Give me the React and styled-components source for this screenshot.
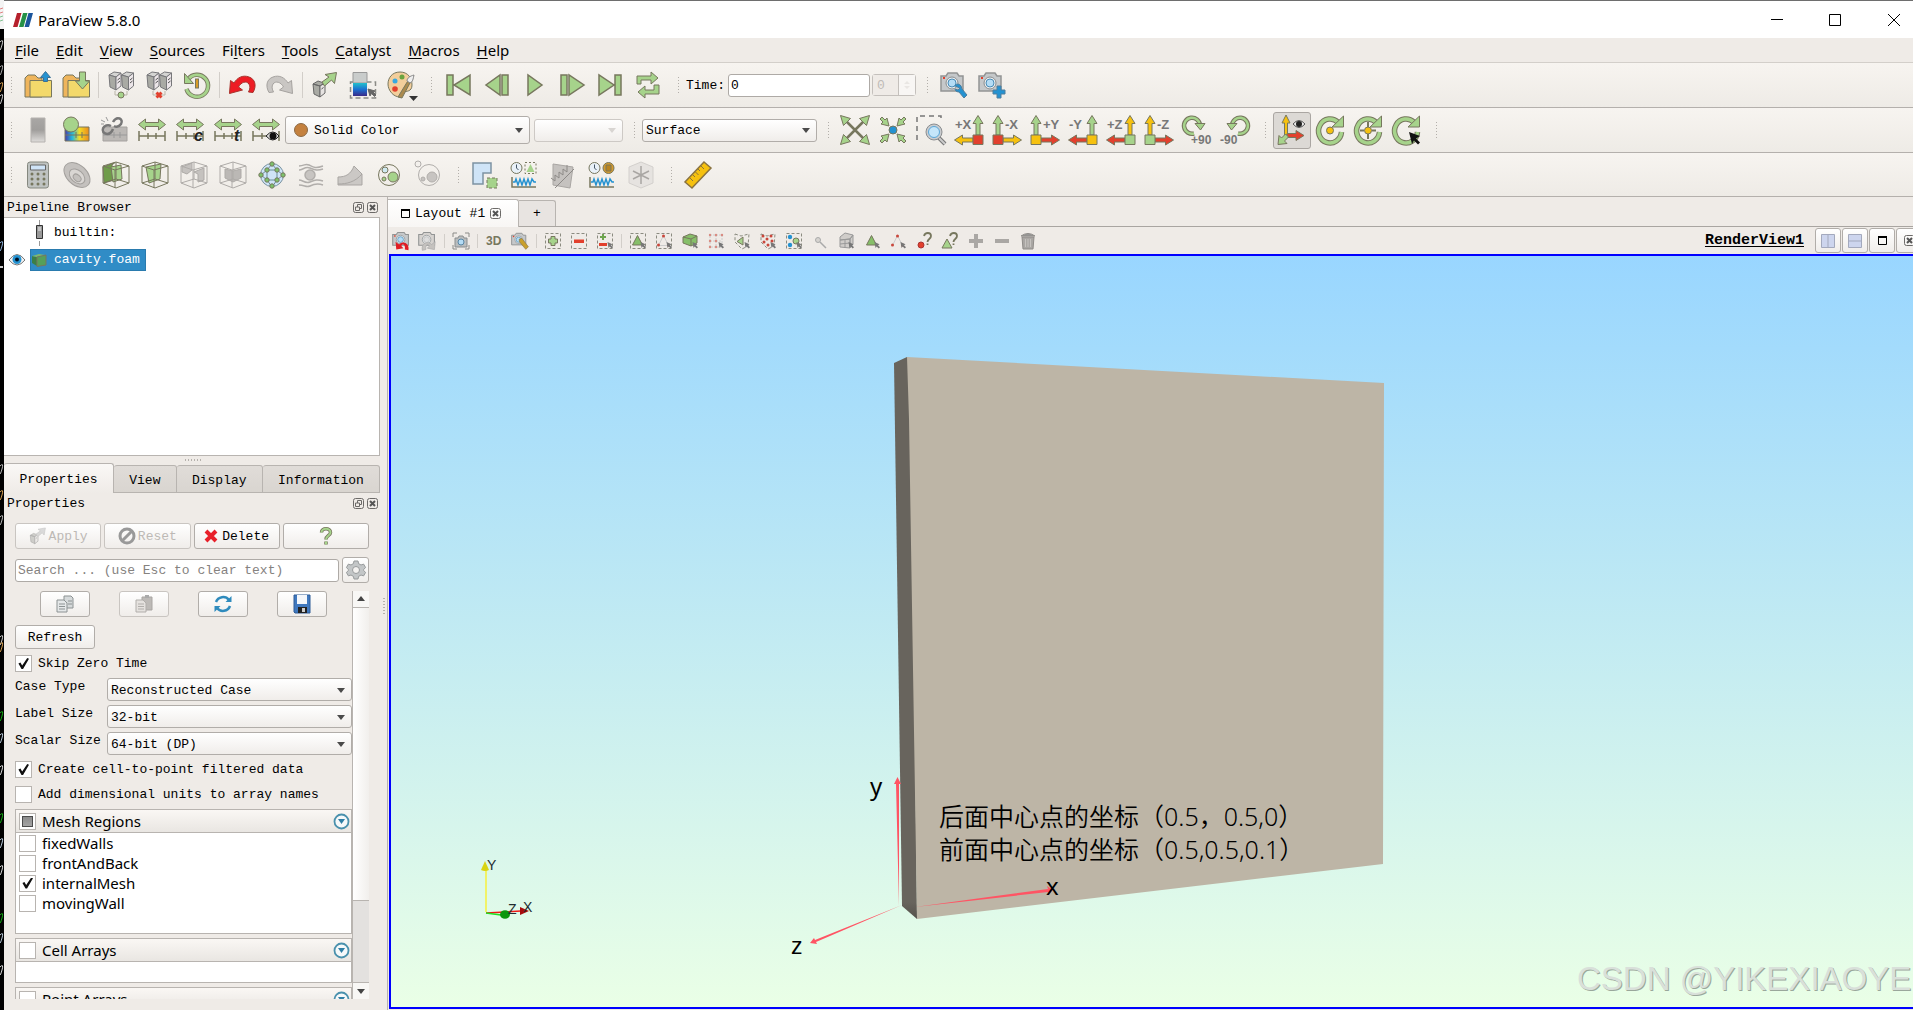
import React, {useEffect, useRef} from 'react';
import styled, {createGlobalStyle, css} from 'styled-components';

const G = '#a6d38b';
const O = '#77775e';
const Y = '#f6c10f';
const R = '#e2402d';
const B = '#2492d1';
const mono = '"Liberation Mono", monospace';
const sans = '"Noto Sans", "Noto Sans CJK SC", sans-serif';

const GlobalStyle = createGlobalStyle`
    * {
        box-sizing: border-box;
    }
    body {
        margin: 0;
        overflow: hidden;
        background: #efebe7;
        color: #000;
        font-family: ${mono};
        font-size: 13px;
    }
    button, input, select {
        font: inherit;
        color: inherit;
        margin: 0;
    }
    svg {
        display: block;
        flex: none;
        overflow: visible;
    }
`;

/* ---------- frame ---------- */

const Desktop = styled.div`
    display: flex;
    height: 100vh;
    overflow: hidden;
`;

const Behind = styled.div`
    flex: none;
    width: 4px;
    overflow: hidden;
    background: #000;
`;

const Window = styled.div`
    flex: 1;
    min-width: 0;
    display: flex;
    flex-direction: column;
`;

const TitleBar = styled.header`
    display: flex;
    align-items: center;
    height: 38px;
    padding-left: 9px;
    border-top: 1px solid #6e6e6e;
    background: #fff;
    font: 15px ${sans};
`;

const Title = styled.span`
    flex: 1;
    padding-left: 5px;
`;

const WindowButton = styled.button`
    display: flex;
    align-items: center;
    justify-content: center;
    width: 58px;
    height: 37px;
    padding: 0;
    border: 0;
    background: none;
    &:last-child {
        width: 38px;
        margin-left: 11px;
    }
`;

const MenuBar = styled.nav`
    display: flex;
    align-items: center;
    gap: 17px;
    height: 25px;
    padding-left: 11px;
    border-bottom: 1px solid #d3cfca;
    font: 15px ${sans};
`;

const MenuItem = styled.button`
    padding: 0;
    border: 0;
    background: none;
    line-height: 20px;
    u {
        text-underline-offset: 2px;
    }
`;

const ToolBar = styled.div`
    display: flex;
    align-items: center;
    height: ${props => props.$short ? 44 : 45}px;
    flex: none;
    border-bottom: 1px solid #b4b0ac;
    background: linear-gradient(#f7f4f0, #eeebe6);
`;

const Grip = styled.span`
    flex: none;
    width: 4px;
    height: 18px;
    margin: 0 ${props => props.$tight ? 4 : 5}px 0 10px;
    background: radial-gradient(circle, #b3afaa 35%, transparent 45%) 0 0 / 3px 3px;
    &:first-child {
        margin-left: 6px;
    }
`;

const Sep = styled.span`
    flex: none;
    width: 1px;
    height: ${props => props.$small ? 14 : 26}px;
    margin: 0 3px;
    background: #d2cec9;
`;

const ToolButton = styled.button`
    flex: none;
    display: flex;
    align-items: center;
    justify-content: center;
    width: ${props => props.$w || 38}px;
    height: ${props => props.$w === 26 ? 26 : 37}px;
    padding: 0;
    border: 1px solid transparent;
    border-radius: 3px;
    background: none;
    ${props => props.$pressed && css`
        border-color: #aaa6a2;
        background: #dcd9d5;
    `}
`;

const face = css`
    border: 1px solid #b1ada9;
    border-radius: 3px;
    background: linear-gradient(#fff, #f0edea);
`;

const TimeLabel = styled.label`
    width: 42px;
`;

const Field = styled.input`
    height: 23px;
    padding: 1px 2px 0;
    border: 1px solid #aeaaa6;
    border-radius: 3px;
    background: #fff;
    outline: 0;
    &::placeholder {
        color: #85827f;
        opacity: 1;
    }
`;

const TimeField = styled(Field)`
    width: 142px;
`;

const Spin = styled.div`
    display: flex;
    width: 44px;
    height: 22px;
    margin-left: 2px;
    border: 1px solid #c4c0bc;
    border-radius: 3px;
    background: #fff;
    input {
        width: 26px;
        padding: 0 4px;
        border: 0;
        border-right: 1px solid #c4c0bc;
        background: #efebe7;
        color: #bfbbb7;
    }
    button {
        flex: 1;
        display: flex;
        align-items: center;
        justify-content: center;
        padding: 0;
        border: 0;
        background: #f8f6f4;
    }
`;

const SelectBox = styled.div`
    position: relative;
    flex: ${props => props.$w ? 'none' : 1};
    width: ${props => props.$w ? props.$w + 'px' : 'auto'};
    height: ${props => props.$h || 23}px;
    margin-left: ${props => props.$gap || 0}px;
    select {
        appearance: none;
        width: 100%;
        height: 100%;
        padding: 1px 20px 0 ${props => props.$icon ? 28 : 3}px;
        ${face}
        opacity: 1;
    }
    select:disabled {
        border-color: #cdc9c5;
    }
    &::after {
        content: '';
        position: absolute;
        right: 7px;
        top: calc(50% - 2px);
        border: 4px solid transparent;
        border-top: 5px solid ${props => props.$off ? '#d8d5d2' : '#4a4a4a'};
        border-bottom: 0;
        pointer-events: none;
    }
`;

const Dot = styled.span`
    position: absolute;
    left: 9px;
    top: 7px;
    width: 14px;
    height: 14px;
    border: 1px solid #8c6a45;
    border-radius: 50%;
    background: #c4813f;
`;

const Body = styled.div`
    flex: 1;
    min-height: 0;
    display: flex;
`;

/* ---------- left dock ---------- */

const Dock = styled.aside`
    flex: none;
    width: 376px;
    display: flex;
    flex-direction: column;
`;

const DockTitle = styled.div`
    flex: none;
    display: flex;
    align-items: center;
    gap: 3px;
    height: 20px;
    padding: 1px 2px 0 3px;
    span {
        flex: 1;
    }
`;

const TinyButton = styled.button`
    display: flex;
    padding: 0;
    border: 0;
    background: none;
`;

const Tree = styled.ul`
    flex: none;
    height: 239px;
    margin: 0;
    padding: 1px 0 0;
    border: 1px solid #b8b4b0;
    border-left: 0;
    background: #fff;
    list-style: none;
`;

const TreeRow = styled.li`
    display: flex;
    align-items: center;
    height: 27px;
    padding-left: 4px;
`;

const EyeSlot = styled.span`
    width: 22px;
`;

const TreeName = styled.span`
    display: flex;
    align-items: center;
    gap: 9px;
    height: 22px;
    padding: 0 5px 0 1px;
    ${props => props.$selected && css`
        border: 1px solid #2a7bae;
        padding-left: 0;
        background: #308cc6;
        color: #fff;
    `}
`;

const Splitter = styled.div`
    flex: none;
    display: flex;
    align-items: center;
    justify-content: center;
    height: 7px;
    span {
        width: 17px;
        height: 2px;
        background: radial-gradient(circle, #b5b1ac 40%, transparent 50%) 0 0 / 3px 2px;
    }
`;

const SideSplitter = styled.div`
    flex: none;
    width: 7px;
    padding: 400px 0 0 3px;
    span {
        display: block;
        width: 2px;
        height: 17px;
        background: radial-gradient(circle, #b5b1ac 40%, transparent 50%) 0 0 / 2px 3px;
    }
`;

const Tabs = styled.div`
    flex: none;
    display: flex;
    align-items: flex-end;
    height: 30px;
`;

const Tab = styled.button`
    flex: ${props => props.$grow};
    height: 28px;
    padding: 2px 0 0;
    border: 1px solid #b8b4b0;
    border-left: 0;
    border-radius: 3px 3px 0 0;
    background: linear-gradient(#e0dcd8, #d9d5d0);
    ${props => props.$active && css`
        height: 30px;
        border-bottom: 0;
        background: linear-gradient(#faf8f6, #efebe7);
    `}
`;

const Panel = styled.div`
    flex: 1;
    min-height: 0;
    display: flex;
    flex-direction: column;
    padding: 10px 11px 11px;
`;

const Actions = styled.div`
    display: grid;
    grid-template-columns: repeat(4, 1fr);
    gap: 3px;
`;

const Push = styled.button`
    display: flex;
    align-items: center;
    justify-content: center;
    gap: ${props => props.$gap || 2}px;
    width: ${props => props.$w ? props.$w + 'px' : 'auto'};
    height: ${props => props.$h || 26}px;
    padding: 0;
    ${face}
    &:disabled {
        border-color: #c9c5c1;
        color: #bdb9b5;
    }
`;

const SearchRow = styled.div`
    display: flex;
    align-items: center;
    gap: 3px;
    padding: 8px 0;
    input {
        flex: 1;
        min-width: 0;
    }
`;

const ScrollArea = styled.div`
    flex: 1;
    min-height: 0;
    display: flex;
`;

const ScrollContent = styled.div`
    flex: 1;
    min-width: 0;
    overflow: hidden;
`;

const ScrollBar = styled.div`
    flex: none;
    display: flex;
    flex-direction: column;
    width: 17px;
    border-left: 1px solid #b8b4b0;
    background: #e3e1df;
    button {
        display: flex;
        align-items: center;
        justify-content: center;
        height: 16px;
        padding: 0;
        border: 0;
        background: #f8f7f5;
    }
`;

const Thumb = styled.div`
    height: 72%;
    border: 1px solid #b8b4b0;
    border-width: 1px 0;
    background: linear-gradient(90deg, #fff, #f1efec);
`;

const Groove = styled.div`
    flex: 1;
    border-bottom: 1px solid #b8b4b0;
`;

const IconRow = styled.div`
    display: grid;
    grid-template-columns: repeat(4, 1fr);
    justify-items: center;
    padding: 0 11px 8px 10px;
`;

const Check = styled.label`
    display: flex;
    align-items: center;
    gap: 6px;
    height: 17px;
    white-space: nowrap;
`;

const Checks = styled.div`
    display: flex;
    flex-direction: column;
    gap: 8px;
    padding: 6px 0;
`;

const Box = styled.input`
    appearance: none;
    flex: none;
    position: relative;
    width: 17px;
    height: 17px;
    border: 1px solid #b8b4b0;
    background: #fff;
    &:checked::before {
        content: '';
        position: absolute;
        inset: 2px;
        background: #111;
        clip-path: polygon(4% 50%, 22% 42%, 38% 68%, 84% 0, 100% 6%, 46% 100%, 32% 100%);
    }
    &:indeterminate::before {
        content: '';
        position: absolute;
        inset: 2px;
        border: 1px solid #4b4b4b;
        background: linear-gradient(#8b8b8b, #a3a3a3);
    }
`;

const PropertyList = styled.div`
    display: grid;
    gap: 4px;
`;

const Property = styled.div`
    display: flex;
    align-items: flex-start;
    label {
        width: 92px;
        line-height: 18px;
        white-space: nowrap;
    }
`;

const Group = styled.section`
    height: ${props => props.$h}px;
    margin-bottom: 4px;
    border: 1px solid #b8b4b0;
    background: #fff;
    font: 15px/20px ${sans};
`;

const GroupHead = styled.div`
    display: flex;
    align-items: center;
    justify-content: space-between;
    height: 23px;
    padding: 0 1px 0 3px;
    border-bottom: 1px solid #b8b4b0;
    background: linear-gradient(#faf7f4, #e9e6e2);
`;

const GroupRow = styled.div`
    display: flex;
    align-items: center;
    height: 20px;
    padding-left: 3px;
`;

/* ---------- render area ---------- */

const Main = styled.main`
    flex: 1;
    min-width: 0;
    display: flex;
    flex-direction: column;
    margin-right: -10px;
    padding-bottom: 1px;
    border-left: 1px solid #b8b4b0;
`;

const LayoutTabs = styled.div`
    flex: none;
    display: flex;
    align-items: flex-end;
    height: 30px;
    border-bottom: 1px solid #a9a5a1;
`;

const LayoutTab = styled.div`
    display: flex;
    align-items: center;
    gap: 5px;
    height: 28px;
    width: 131px;
    padding-left: 13px;
    margin-bottom: -1px;
    border: 1px solid #b8b4b0;
    border-left: 0;
    border-bottom: 0;
    border-radius: 0 3px 0 0;
    background: linear-gradient(#fff, #f8f6f4);
`;

const AddTab = styled.button`
    width: 37px;
    height: 26px;
    padding: 0;
    border: 1px solid #b8b4b0;
    border-left: 0;
    border-bottom: 0;
    border-radius: 0 3px 0 0;
    background: #e8e4e1;
`;

const ViewBar = styled.div`
    flex: none;
    display: flex;
    align-items: center;
    height: 27px;
    padding-left: 1px;
`;

const ViewName = styled.a`
    margin-left: auto;
    margin-right: 11px;
    color: #000;
    font-size: 15px;
    font-weight: 700;
    text-underline-offset: 2px;
`;

const ViewButtons = styled.div`
    display: flex;
    gap: 1px;
    padding-right: 1px;
`;

const Viewport = styled.div`
    flex: 1;
    min-height: 0;
    margin-left: 1px;
    border: 2px solid #0000ff;
    background: linear-gradient(#99d6ff, #eaffe6);
    svg {
        width: 100%;
        height: 100%;
    }
`;

/* ---------- icons ---------- */

const Icon = ({s = 28, v = s, children}) => (
    <svg width={s} height={s} viewBox={`0 0 ${v} ${v}`} fill="none" stroke={O} strokeWidth="1" aria-hidden="true">{children}</svg>
);

const Folder = ({down}) => (
    <Icon>
        <path d="M1 26V7l3-3h7l3 3h4v19z" fill="#efb55c" />
        <path d="M6 9.500h21.500V26H6z" fill="#f3d96b" />
        {down
            ? <path d="M17.500 1h6v9h4l-7 8-7-8h4z" fill={G} />
            : <path d="M21.500.5l5 6h-3v4h-4v-4h-3z" fill={B} stroke="#3a7196" />}
    </Icon>
);

const Tower = ({x}) => (
    <g transform={`translate(${x} 0)`} stroke="#77777a">
        <path d="M1 4l5-3 7 1-5 4z" fill="#d5d5d3" />
        <path d="M1 4l7 2v13l-6-3z" fill="#a9aaa4" />
        <path d="M8 6l5-4v13l-5 4z" fill="#ece6e9" />
        <path d="M9.500 9l2.500-2M9.500 12l2.500-2" stroke="#555" />
    </g>
);

const Servers = ({off}) => (
    <Icon>
        <Tower x={1} /><Tower x={13.500} />
        <path d="M8 20v4h12v-4" stroke="#b9b5a8" />
        {off
            ? <path d="M11.500 21.500l5 5m0-5l-5 5" stroke={R} strokeWidth="3" />
            : <circle cx="14" cy="24" r="3" fill={G} />}
    </Icon>
);

const Recent = () => (
    <Icon>
        <path d="M5 8.500A11 11 0 1 1 3.500 18" stroke={O} strokeWidth="4.500" />
        <path d="M5 8.500A11 11 0 1 1 3.500 18" stroke={G} strokeWidth="2.800" />
        <path d="M1.500 2.500v10h9z" fill={G} />
        <rect x="12.500" y="8" width="3" height="9" fill="#d99c26" />
    </Icon>
);

const Undo = ({redo}) => (
    <Icon>
        <path
            transform={redo ? 'translate(28 0) scale(-1 1)' : ''}
            d="M2.500 9.500L1.500 22.500l13-3.500-4-3c2.500-5 8-6.500 10.500-3 1.500 2.500 1 5-.5 8l4.500.5c4-7 2-13.500-4-15.500C14.500 3.500 9 7 6 12z"
            fill={redo ? '#c9c6c3' : '#ee1c24'}
            stroke={redo ? '#a5a29f' : '#a8322c'}
        />
    </Icon>
);

const Cube = ({gray}) => (
    <Icon>
        <path d="M2 13l5-3 6 2-4 3zM2 13l7 2v11l-6-3z" fill="#a9aaa4" stroke="#666" />
        <path d="M9 15l5-3v10l-5 4z" fill="#e6e3e1" stroke="#666" />
        <path d="M10.500 18l2-1.500" stroke="#555" />
        <path d="M11 11l7-5-4-2.500 11.500-2-2 11-3-3.500-7 6z" fill={gray ? '#bbb' : G} stroke={gray ? '#999' : O} />
    </Icon>
);

const ColorSelect = () => (
    <Icon>
        <defs>
            <linearGradient id="cs" x2="0" y2="1"><stop offset="0" stopColor="#23c0cc" /><stop offset=".5" stopColor="#1c6fd0" /><stop offset="1" stopColor="#3b2a88" /></linearGradient>
        </defs>
        <path d="M1.500 11h25v16h-25z" stroke="#8b8b86" strokeDasharray="5 3" strokeWidth="1.500" />
        <path d="M4 1.500h14V12H4z" fill="#c9cccb" stroke="#999" />
        <path d="M4 12h14v13H4z" fill="url(#cs)" stroke="none" />
        <path d="M19 18l2 7 1.500-2.500 3 3 1.500-1.500-3-3 2-1z" fill="#666" stroke="#666" />
    </Icon>
);

const Palette = () => (
    <Icon>
        <path d="M13 1C5 1 1 7 1 13s5 13 12 13c3 0 2-4 4-5s8 0 8-7S21 1 13 1z" fill="#f3ce9b" />
        <circle cx="15" cy="6" r="2.500" fill="#69a33f" stroke="none" />
        <circle cx="8" cy="10" r="2.500" fill="#38a9e0" stroke="none" />
        <circle cx="8" cy="18" r="2.800" fill={R} stroke="none" />
        <path d="M22 8L11 26l4 1 9-17z" fill="#ab8a4e" />
        <path d="M20 10c0-3 3-5 7-6-1 4-1 7-4 8z" fill="#eee" stroke="#888" />
        <path d="M22 25h9l-4.500 5z" fill="#333" stroke="none" />
    </Icon>
);

const vcr = {
    first: 'M3 4h6v20H3zM26 4v20L10 14z',
    prev: 'M20 4h6v20h-6zM18 4v20L4 14z',
    play: 'M8 4v20l14-10z',
    next: 'M3 4h6v20H3zM11 4v20l15-10z',
    last: 'M19 4h6v20h-6zM3 4v20l15-10z',
};

const Vcr = ({kind}) => (
    <Icon><path d={vcr[kind]} fill={G} strokeWidth="1.500" /></Icon>
);

const Loop = () => (
    <Icon>
        <path d="M3 13V5h14V1l7 6-7 6V9H7v4z" fill={G} />
        <path d="M25 14v9H11v4l-7-6 7-6v4h9v-5z" fill={G} />
    </Icon>
);

const Camera = ({s = 28, extra, gray}) => (
    <Icon s={s} v={28}>
        <path d="M1 5h5l2-3h9l2 3h4v15H1z" fill={gray ? '#d6d3d0' : '#c5c8ca'} stroke="#929494" strokeWidth="1.500" />
        <circle cx="12" cy="12" r="6" fill="#e8eaeb" stroke="#8b8f91" />
        <circle cx="12" cy="12" r="4" fill={gray ? '#ddd' : '#b4dcf5'} stroke={gray ? '#bbb' : '#4b8db8'} />
        {!gray && <path d="M3 7h2" stroke={R} strokeWidth="2" />}
        {extra}
    </Icon>
);

const Bar = () => (
    <Icon>
        <defs>
            <linearGradient id="gb" x2="0" y2="1"><stop stopColor="#a9a7a5" /><stop offset=".5" stopColor="#a09e9c" /><stop offset="1" stopColor="#dedcda" /></linearGradient>
        </defs>
        <path d="M7 2h14v24H7z" fill="url(#gb)" stroke="#b5b2af" />
    </Icon>
);

const EditMap = ({gray}) => (
    <Icon>
        <defs>
            <linearGradient id="rb"><stop stopColor="#4b39a8" /><stop offset=".3" stopColor="#24b9df" /><stop offset=".6" stopColor="#f4dc27" /><stop offset="1" stopColor="#e98a1d" /></linearGradient>
        </defs>
        <path d="M3 11h24v14H3z" fill={gray ? '#bbb8b5' : 'url(#rb)'} stroke={gray ? '#a5a29f' : O} />
        <path d="M3 19h24M14 16v6M20 16v6" stroke={gray ? '#999' : O} />
        {gray
            ? <>
                <path d="M13 6c4-7 11-3 8 2-2 3-5 3-7 2M13 13c-3 8-12 5-10-.5 1-3 5-4 8-2.500" stroke="#777" strokeWidth="2.500" />
                <path d="M6 1l2 4M1 4l4 2M1 8h3" stroke="#999" />
            </>
            : <circle cx="9" cy="8.500" r="7.500" fill={G} />}
    </Icon>
);

const Rescale = ({mark}) => (
    <Icon>
        <path d="M.5 8.500l7-5.500v3.500h13V3l7 5.500-7 5.500v-3.500h-13V14z" fill={G} />
        <path d="M1 15v10M27 15v10M10 17v6M18 17v6M1 20h26" strokeWidth="1.500" />
        {mark === 'eye' && (
            <>
                <path d="M14 20q7-8 13 0-6 8-13 0z" fill="#ddd" stroke="#222" />
                <circle cx="21" cy="20" r="3.500" fill="#111" stroke="none" />
            </>
        )}
        {(mark === 'c' || mark === 't') && (
            <text x={mark === 't' ? 20 : 18} y="25" fill="#222" stroke="none" fontFamily="Liberation Sans, sans-serif" fontStyle="italic" fontWeight="700" fontSize="16">{mark}</text>
        )}
    </Icon>
);

const ResetCam = () => (
    <Icon s={30}>
        <path d="M4 4l22 22M26 4L4 26" strokeWidth="2.500" />
        {[0, 90, 180, 270].map(a => <path key={a} transform={`rotate(${a} 15 15)`} d="M.5.5l10 3-7 7z" fill={G} />)}
    </Icon>
);

const ZoomData = () => (
    <Icon s={30}>
        {[0, 90, 180, 270].map(a => (
            <path key={a} transform={`rotate(${a} 15 15)`} d="M11 11l-2-8-2 2-3-3-2 2 3 3-2 2z" fill={G} />
        ))}
        <circle cx="15" cy="15" r="4" fill={B} />
    </Icon>
);

const ZoomBox = () => (
    <Icon s={30}>
        <path d="M1 25V1h24v6" stroke="#777" strokeWidth="1.500" strokeDasharray="5 4" />
        <path d="M22 22l7 7" stroke="#777" strokeWidth="4" />
        <path d="M22 22l7 7" stroke="#ccc" strokeWidth="2" />
        <circle cx="18" cy="17" r="8" fill="#c9cccf" stroke="#8b8d8f" />
        <circle cx="18" cy="17" r="5.500" fill="#c5e6fa" stroke="#5aa6d8" />
    </Icon>
);

const Axis = ({label, flip, up, side, box}) => (
    <Icon s={30}>
        <g transform={flip ? 'translate(30 0) scale(-1 1)' : ''}>
            <path d="M24 .5l5 8h-3V20h-4V8.500h-3z" fill={up} />
            <path d="M.5 25l8-5v3H19v4H8.500v3z" fill={side} />
            <path d="M19 20h10v9.500H19z" fill={box} />
        </g>
        <text x={flip ? 13 : 1} y="14" fill="#777" stroke="none" fontFamily="Liberation Sans, sans-serif" fontWeight="700" fontSize="13">{label}</text>
    </Icon>
);

const Turn = ({left}) => (
    <Icon s={30}>
        <g transform={left ? 'translate(30 0) scale(-1 1)' : ''}>
            <path d="M12 18.500A8 8 0 1 1 18 10" strokeWidth="4.500" />
            <path d="M12 18.500A8 8 0 1 1 18 10" stroke={G} strokeWidth="2.500" />
            <path d="M13 8.500h10L18.500 15z" fill={G} />
        </g>
        <text x={left ? 0 : 9} y="29" fill="#777" stroke="none" fontFamily="Liberation Sans, sans-serif" fontWeight="700" fontSize="12">{left ? '-90' : '+90'}</text>
    </Icon>
);

const ShowAxes = () => (
    <Icon s={30}>
        <path d="M9 0l4 8h-2.500v12h-3V8H5z" fill={Y} />
        <path d="M27 20.500l-8-5v3h-9v4h9v3z" fill={R} />
        <path d="M1 29.500l1-9 2.500 2.500 4-4 3 3-4 4 2.500 2.500z" fill={G} />
        <path d="M16 9q6-7 12 0-6 7-12 0z" fill="#eee" stroke="#555" />
        <circle cx="22" cy="9" r="3" fill="#222" stroke="none" />
    </Icon>
);

const Center = ({kind}) => (
    <Icon s={30}>
        <path d="M23 7.300A11.500 12 0 1 0 26.500 17" strokeWidth="5.500" />
        <path d="M23 7.300A11.500 12 0 1 0 26.500 17" stroke={G} strokeWidth="3.500" />
        <path d="M28.500 1v11H17z" fill={G} />
        {kind === 'pick'
            ? <path d="M18 17l3 12 2-3.500 4 4 2-2-4-4 4-2.500z" fill="#111" stroke="none" />
            : <circle cx="15" cy="15.500" r="3.500" fill={Y} />}
        {kind === 'reset' && <path d="M15 7v5M15 19v5M7 15.500h4M19 15.500h4" strokeWidth="2" />}
    </Icon>
);

const Calculator = () => (
    <Icon>
        <rect x="3.500" y="1" width="21" height="26" rx="2.500" fill="#bfc3c1" stroke="#85887f" />
        <path d="M6.500 4h15v5h-15z" fill="#cfe4f7" stroke="#666" />
        {[13, 18, 23].map(y => [8, 14, 20].map(x => <circle key={x + '-' + y} cx={x} cy={y} r="1.500" fill={O} stroke="none" />))}
    </Icon>
);

const Contour = () => (
    <Icon>
        <g transform="rotate(42 14 14)" stroke="#a3a09d">
            <ellipse cx="14" cy="14" rx="15" ry="10" fill="#c4c1be" />
            <ellipse cx="15" cy="15" rx="9" ry="6" fill="#d9d6d3" />
            <ellipse cx="16" cy="16" rx="4.500" ry="3" fill="#c4c1be" />
        </g>
    </Icon>
);

const WireCube = ({fill, kind, stroke = O}) => (
    <Icon>
        {kind === 'clip' && <path d="M1 6l12-4.500L10 4l2 15-10 3z" fill="#6f9c4a" stroke={stroke} />}
        {kind === 'clip' && <path d="M9 6l10-2 1 14-9 3z" fill={fill} stroke={stroke} />}
        {kind === 'slice' && <path d="M5 6l15-3-1 15-11 4z" fill={fill} stroke={stroke} />}
        {kind === 'thres' && <path d="M2 6l10-4v7l-5 4-5-2zM14 11l10-4v12l-6 2v-8z" fill={fill} stroke={stroke} />}
        {kind === 'grid' && <path d="M6 8l8 2 8-2v9l-8 4-8-4z" fill={fill} stroke={stroke} />}
        <path d="M1 5l13-4 13 4v17l-13 5-13-5zM1 5l12 4 14-4M13 9v18M14 1v17M1 22l13-4 13 4" stroke={stroke} />
    </Icon>
);

const Glyph = () => (
    <Icon>
        <circle cx="14" cy="14" r="11.500" fill="#cfe4f7" stroke="#7b93a0" />
        <path d="M14 3L9 9v10l5 7 5-7V9zM3 14l6-5h10l6 5-6 5H9z" stroke="#6a8d97" />
        {[[14, 3], [3, 14], [25, 14], [14, 25], [9, 9], [19, 9], [9, 19], [19, 19]].map(([x, y]) => (
            <circle key={x + '-' + y} cx={x} cy={y} r="2.200" fill="#7cc36a" />
        ))}
    </Icon>
);

const Stream = () => (
    <Icon>
        <g stroke="#b1aeab" strokeWidth="1.500">
            <path d="M2 5c6 0 6-3 10-1s6 4 14 1M2 9c4 0 6-4 11-2s7 3 13 1M2 19c4 0 6 4 11 2s7-3 13-1M2 24c6 0 7 3 11 1s7-3 13-1" />
            <circle cx="13" cy="14" r="5" fill="#c7c4c1" />
        </g>
    </Icon>
);

const Warp = () => (
    <Icon>
        <path d="M2 16c8 0 13-3 16-11l8 8v11H2z" fill="#cbc8c5" stroke="#a9a6a3" />
        <path d="M2 23c9 0 17-2 24-10" stroke="#a9a6a3" />
    </Icon>
);

const GroupData = ({gray}) => {
    const c = gray ? '#b1aeab' : O;
    return (
        <Icon>
            <circle cx={gray ? 15 : 14} cy="14" r="10.500" stroke={c} />
            {gray
                ? <circle cx="4" cy="3" r="3" stroke={c} fill="#f3f0ec" />
                : <circle cx="10" cy="9" r="3" fill="#cfe9f0" stroke={c} />}
            <circle cx="18" cy="16" r="5" fill={gray ? '#c7c4c1' : G} stroke={c} />
            <circle cx="9" cy="18" r="2" fill={gray ? '#c7c4c1' : G} stroke={c} />
        </Icon>
    );
};

const Extract = () => (
    <Icon>
        <path d="M2 2h18v10h-8v11H2z" fill="#cfe4f7" stroke="#7d92a3" strokeWidth="1.500" />
        <path d="M16 17h10v10H16z" fill={G} strokeDasharray="3 2" />
    </Icon>
);

const Wave = ({children}) => (
    <Icon>
        <path d="M2 16v10h24" strokeWidth="1.500" />
        <path d="M3 21h2l1-3 2 6 2-6 2 6 2-6 2 6 2-6 2 6 2-6 2 3h2" stroke={B} strokeWidth="1.500" />
        <circle cx="6.500" cy="7" r="5.500" fill="#e9f1f8" />
        <path d="M6.500 3.500V7l2 2" stroke="#456" />
        {children}
    </Icon>
);

const PlotLine = () => (
    <Icon>
        <path d="M4 3l20 3-3 21-17-3z" fill="#c5c2bf" stroke="#a9a6a3" />
        <path d="M2 17l4 3 0-6 4 3 0-6 4 3 0-6 4 3 0-7M6 27L25 8" stroke="#8d8a87" />
    </Icon>
);

const Prism = () => (
    <Icon>
        <path d="M2 6l12-5 12 5v16l-12 5-12-5z" fill="#e6e3e0" stroke="#d3d0cd" />
        <path d="M14 5v18M6 10l16 8M22 10L6 18" stroke="#a9a6a3" strokeWidth="1.500" />
    </Icon>
);

const Ruler = () => (
    <Icon>
        <path d="M20 1l7 6L8 27l-7-6z" fill={Y} stroke="#8a7340" strokeWidth="1.500" />
        <path d="M17 5l3 3M14 8l2 2M11.500 11l3 3M9 14l2 2M6 17l3 3" stroke="#8a7340" />
    </Icon>
);

const Arrow = <path d="M11.500 10l1 6 1.200-1.500 2 2 1.300-1.300-2-2 1.500-1z" fill="#777" stroke="none" />;
const Dash = <path d="M1.500 1.500h15v15h-15z" stroke="#8b8b80" strokeDasharray="3 2" />;
const Tri = <path d="M8.500 3.500l5 9.500h-10z" fill="#86bf69" />;
const Pts = ({at, c = '#c9473c', r = 1.500}) => at.map(([x, y]) => <circle key={x + '.' + y} cx={x} cy={y} r={r} fill={c} stroke="none" />);
const Quest = <path d="M9 4c1-4 7-4 7 0 0 3-3.500 3-3.500 6M12.500 11.500V13" strokeWidth="1.800" />;
const Poly = <path d="M2 2l6 2 8-2-1 12-6 3-7-7z" stroke="#8b8b80" strokeDasharray="3 2" />;

const small = {
    addSel: <>{Dash}<path d="M7 4.500h4V7h2.500v4H11v2.500H7V11H4.500V7H7z" fill={G} /></>,
    subSel: <>{Dash}<path d="M4 7.500h10v3.500H4z" fill={R} stroke="none" /></>,
    togSel: <>{Dash}<path d="M7 2v6M4 5h6" stroke="#6da44e" strokeWidth="2" /><path d="M3 11h8v3H3z" fill={R} stroke="none" />{Arrow}</>,
    cells: <>{Dash}{Tri}{Arrow}</>,
    points: <>{Dash}<path d="M8.500 3.500l5 10h-10z" stroke="#ccc" /><Pts at={[[8.500, 4], [3.500, 13], [13.500, 13]]} />{Arrow}</>,
    cellsThrough: <><path d="M2 5l7-3 7 2v7l-6 3-8-3z" fill="#86bf69" /><path d="M2 5l8 2 6-3M10 7v7" />{Arrow}</>,
    pointsThrough: <><path d="M3 3h12v12H3zM3 9h12M9 3v12" stroke="#ccc" strokeDasharray="2 1" /><Pts r={1.200} at={[[3, 3], [9, 3], [15, 3], [3, 9], [9, 9], [3, 15], [9, 15]]} c="#d98a80" />{Arrow}</>,
    polyCells: <>{Poly}<path d="M10 5v8L4 9.500z" fill={G} />{Arrow}</>,
    polyPoints: <>{Poly}<Pts at={[[4, 4], [8, 7], [12, 4], [5, 10], [9, 13], [13, 9]]} />{Arrow}</>,
    blocks: <>{Dash}<Pts at={[[5, 5], [5, 13]]} c={B} r={2.200} /><circle cx="11" cy="9" r="3" fill={G} />{Arrow}</>,
    hoverPts: <><circle cx="7" cy="8" r="2.500" fill="#d6d3d0" stroke="#aaa" /><path d="M9 10l6 6" stroke="#aaa" strokeWidth="1.500" /></>,
    cubeGray: <><path d="M3 5l5-4 8 2-3 4-10 1zM3 8l10-1v9l-10-1zM13 7l3-4v9l-3 4z" fill="#d0cdca" stroke="#999" /><path d="M3 12l10-1M8 7v9" stroke="#999" />{Arrow}</>,
    tri: <>{Tri}{Arrow}</>,
    triPts: <><path d="M8.500 3.500l5 10M8.500 3.500l-5 10" stroke="#ccc" /><Pts at={[[8.500, 4], [3.500, 13], [13.500, 13]]} />{Arrow}</>,
    askPt: <>{Quest}<circle cx="6" cy="13" r="3" fill={R} stroke="#a33" /></>,
    askCell: <>{Quest}<path d="M6 7l5 9H1z" fill={G} /></>,
    plus: <path d="M7 2h4v5h5v4h-5v5H7v-5H2V7h5z" fill="#aaa7a4" stroke="none" />,
    minus: <path d="M2 7h14v4H2z" fill="#aaa7a4" stroke="none" />,
    trash: <><path d="M3 5h12l-1 12H4z" fill="#aaa7a4" stroke="#8f8c89" /><path d="M2 4q7-5 14 0z" fill="#999" stroke="#8f8c89" /><path d="M6.500 7v8M9 7v8M11.500 7v8" stroke="#c5c2bf" /></>,
};

const Float = ({close}) => (
    <Icon s={11}>
        <rect x=".5" y=".5" width="10" height="10" rx="2" stroke="#6c6a68" />
        {close
            ? <path d="M3 3l5 5M8 3L3 8" stroke="#555" strokeWidth="2" />
            : <path d="M2.500 5h4v3.500h-4zM4.500 5V2.500h4v4h-2" stroke="#6c6a68" />}
    </Icon>
);

const Copy = () => (
    <Icon s={20}>
        <path d="M9 2h7l2 2v10H9z" fill="#d6dadb" stroke="#8c9293" />
        <path d="M2 6h7l3 3v9H2z" fill="#e5e8e9" stroke="#8c9293" />
        <path d="M4 10h6M4 12.500h6M4 15h6M13 7h4M13 10h4" stroke="#8c9293" />
    </Icon>
);

const Paste = () => (
    <Icon s={20}>
        <path d="M8 3h10v13H8z" fill="#bdbab7" stroke="#a9a6a3" />
        <path d="M11 1h4v3h-4z" fill="#aaa" stroke="none" />
        <path d="M2 6h7l3 3v9H2z" fill="#e5e2df" stroke="#b1aeab" />
        <path d="M4 10h6M4 12.500h6M4 15h6" stroke="#b1aeab" />
    </Icon>
);

const Reload = () => (
    <Icon s={20}>
        <path d="M3 8a7.500 7.500 0 0 1 13-2M17 12a7.500 7.500 0 0 1-13 2" stroke="#2f8bbd" strokeWidth="2.500" />
        <path d="M18.500 2v6h-6zM1.500 18v-6h6z" fill="#2f8bbd" stroke="none" />
    </Icon>
);

const Save = () => (
    <Icon s={20}>
        <path d="M2 1h16v18H3l-1-1z" fill="#3f78bf" stroke="#2f5c98" />
        <path d="M5 1h10v9H5z" fill="#f4f7fb" stroke="none" />
        <path d="M6 13h9v6H6z" fill="#222" stroke="none" />
        <path d="M10 14h3v4h-3z" fill="#ccc" stroke="none" />
    </Icon>
);

const Gear = () => (
    <Icon s={20}>
        <path d="M8 1h4l.6 2.600 2.400 1.400 2.600-.9 2 3.500-2 1.900v1l2 1.900-2 3.500-2.600-.9-2.400 1.400L12 19H8l-.6-2.600L5 15l-2.600.9-2-3.500 2-1.900v-1l-2-1.900 2-3.500L5 5l2.400-1.400z" fill="#c3c6c7" stroke="#979a9b" />
        <circle cx="10" cy="10" r="3.500" fill="#f4f2f0" stroke="#979a9b" />
    </Icon>
);

const Collapse = () => (
    <Icon s={17}>
        <circle cx="8.500" cy="8.500" r="7" fill="#f6f9fa" stroke="#4a91ad" strokeWidth="1.800" />
        <path d="M5 6h7l-3.500 5z" fill="#2f7fa6" stroke="none" />
    </Icon>
);

/* ---------- scene ---------- */

const Scene = () => (
    <svg viewBox="391 256 1530 751" role="img" aria-label="cavity.foam">
        <defs>
            <linearGradient id="ed" x2="0" y2="1"><stop offset=".97" stopColor="#68645d" /><stop offset="1" stopColor="#55514b" /></linearGradient>
        </defs>
        <path d="M894 363l13-6 4 3 6 559-15-13z" fill="url(#ed)" />
        <path d="M907 357l477 26-1 481-466 55-8-500z" fill="#bdb5a6" />
        <g fill="#ff5464">
            <path d="M899 906l-3-122h-2l3.500-7 3.500 7h-2z" />
            <path d="M902 905l-86 37 1 2-7-1 4-5 1 2z" />
            <path d="M915 907l133-18-1-3 6 4-5 5v-3z" />
        </g>
        <g fontFamily="Noto Sans, Noto Sans CJK SC, sans-serif" fontSize="24" fill="#000">
            <text x="870" y="795">y</text>
            <text x="791" y="954">z</text>
            <text x="1046" y="895">x</text>
        </g>
        <g fontFamily="Noto Sans, Noto Sans CJK SC, sans-serif" fontSize="25" fontWeight="350" fill="#000">
            <text x="939" y="826">后面中心点的坐标（0.5，0.5,0）</text>
            <text x="939" y="859">前面中心点的坐标（0.5,0.5,0.1）</text>
        </g>
        <path d="M486 912V869" stroke="#f7f03c" strokeWidth="1.500" />
        <path d="M486 913l35-2" stroke="#f01818" strokeWidth="1.500" />
        <path d="M486 913l15 2" stroke="#20e020" strokeWidth="1.500" />
        <path d="M485 861l4 9q-4 2-8 0z" fill="#d9d312" />
        <path d="M520 907v8l9-4z" fill="#a80c0c" />
        <ellipse cx="505" cy="914.500" rx="5" ry="4.300" fill="#0d960d" />
        <g fontFamily="Liberation Sans, sans-serif" fontSize="14" fill="#222d30">
            <text x="487" y="870">Y</text>
            <text x="508" y="914">Z</text>
            <text x="523" y="912">X</text>
        </g>
        <g fontFamily="Liberation Sans, sans-serif" fontSize="33">
            <text x="1578" y="991" fill="#9aa79b">CSDN @YIKEXIAOYE</text>
            <text x="1577" y="990" fill="#d9e0da">CSDN @YIKEXIAOYE</text>
        </g>
    </svg>
);

/* ---------- data ---------- */

const menus = ['File:0', 'Edit:0', 'View:0', 'Sources:0', 'Filters:2', 'Tools:0', 'Catalyst:0', 'Macros:0', 'Help:0'];

const axes = [
    {label: '+X', up: G, side: Y, box: R},
    {label: '-X', flip: true, up: G, side: Y, box: R},
    {label: '+Y', flip: true, up: G, side: R, box: Y},
    {label: '-Y', up: G, side: R, box: Y},
    {label: '+Z', up: Y, side: R, box: G},
    {label: '-Z', flip: true, up: Y, side: R, box: G},
];

const specks = [
    [42, '#ccc'], [67, '#aaa'], [84, '#d8a050'], [96, '#ccc'], [243, '#8fb4dd'], [466, '#bbb'], [492, '#d8a050'],
    [517, '#bbb'], [637, '#ccc'], [644, '#d8a050'], [713, '#12b012'], [735, '#bcd'], [767, '#ddd'], [815, '#12b012'],
    [840, '#bcd'], [867, '#ddd'], [915, '#12b012'], [935, '#bcd'], [967, '#ddd'],
];

const Tool = ({name, children, ...rest}) => (
    <ToolButton type="button" aria-label={name} {...rest}>{children}</ToolButton>
);

const SmallTool = ({name}) => (
    <Tool name={name} $w={26}><Icon s={18}>{small[name]}</Icon></Tool>
);

function MixedBox(props) {
    const ref = useRef(null);
    useEffect(() => {
        ref.current.indeterminate = true;
    }, []);
    return <Box type="checkbox" ref={ref} {...props} />;
}

function PropertySelect({id, label, value}) {
    return (
        <Property>
            <label htmlFor={id}>{label}</label>
            <SelectBox>
                <select id={id}><option>{value}</option></select>
            </SelectBox>
        </Property>
    );
}

function RegionGroup({title, items = [], mixed, h}) {
    return (
        <Group $h={h}>
            <GroupHead>
                <Check>
                    {mixed ? <MixedBox /> : <Box type="checkbox" />}
                    {title}
                </Check>
                <TinyButton type="button" aria-label={'Collapse ' + title}><Collapse /></TinyButton>
            </GroupHead>
            {items.map(item => (
                <GroupRow key={item.name}>
                    <Check><Box type="checkbox" defaultChecked={item.on} />{item.name}</Check>
                </GroupRow>
            ))}
        </Group>
    );
}

function DockHeader({children}) {
    return (
        <DockTitle>
            <span>{children}</span>
            <TinyButton type="button" aria-label="Float"><Float /></TinyButton>
            <TinyButton type="button" aria-label="Close"><Float close /></TinyButton>
        </DockTitle>
    );
}

function MainToolbar() {
    return (
        <ToolBar>
            <Grip />
            <Tool name="Open"><Folder /></Tool>
            <Tool name="Save Data"><Folder down /></Tool>
            <Sep />
            <Tool name="Connect"><Servers /></Tool>
            <Tool name="Disconnect"><Servers off /></Tool>
            <Tool name="Recent"><Recent /></Tool>
            <Sep />
            <Tool name="Undo"><Undo /></Tool>
            <Tool name="Redo"><Undo redo /></Tool>
            <Sep />
            <Tool name="Auto Apply"><Cube /></Tool>
            <Tool name="Find Data"><ColorSelect /></Tool>
            <Tool name="Load Palette"><Palette /></Tool>
            <Grip />
            {Object.keys(vcr).map(kind => <Tool key={kind} name={kind}><Vcr kind={kind} /></Tool>)}
            <Tool name="Loop"><Loop /></Tool>
            <Grip />
            <TimeLabel htmlFor="time">Time:</TimeLabel>
            <TimeField id="time" defaultValue="0" />
            <Spin>
                <input aria-label="Time index" defaultValue="0" disabled />
                <button type="button" aria-label="Step" disabled>
                    <Icon s={8}><path d="M1 3h6L4 0zM1 5h6L4 8z" fill="#e9e6e3" stroke="none" /></Icon>
                </button>
            </Spin>
            <Grip />
            <Tool name="Adjust Camera">
                <Camera extra={<path d="M15 15c0-2 4-3 6 0l1 3 5 6-3 3-5-6c-3 0-4-2-4-3l3 1 2-2z" fill={B} stroke="#4d7f9f" />} />
            </Tool>
            <Tool name="Add Camera">
                <Camera extra={<path d="M19 15h4v4h4v4h-4v4h-4v-4h-4v-4h4z" fill={B} stroke="#4d7f9f" />} />
            </Tool>
        </ToolBar>
    );
}

function ColorToolbar() {
    return (
        <ToolBar>
            <Grip />
            <Tool name="Color Legend"><Bar /></Tool>
            <Tool name="Edit Color Map"><EditMap /></Tool>
            <Tool name="Separate Color Map"><EditMap gray /></Tool>
            <Tool name="Rescale"><Rescale /></Tool>
            <Tool name="Rescale Custom"><Rescale mark="c" /></Tool>
            <Tool name="Rescale Temporal"><Rescale mark="t" /></Tool>
            <Tool name="Rescale Visible"><Rescale mark="eye" /></Tool>
            <SelectBox $w={245} $h={28} $icon>
                <select aria-label="Coloring"><option>Solid Color</option></select>
                <Dot />
            </SelectBox>
            <SelectBox $w={89} $gap={4} $off>
                <select aria-label="Component" disabled><option> </option></select>
            </SelectBox>
            <Grip />
            <SelectBox $w={175}>
                <select aria-label="Representation"><option>Surface</option></select>
            </SelectBox>
            <Grip />
            <Tool name="Reset"><ResetCam /></Tool>
            <Tool name="Zoom To Data"><ZoomData /></Tool>
            <Tool name="Zoom To Box"><ZoomBox /></Tool>
            {axes.map(a => <Tool key={a.label} name={a.label}><Axis {...a} /></Tool>)}
            <Tool name="Rotate 90"><Turn /></Tool>
            <Tool name="Rotate -90"><Turn left /></Tool>
            <Grip />
            <Tool name="Orientation Axes" $pressed><ShowAxes /></Tool>
            <Tool name="Show Center"><Center /></Tool>
            <Tool name="Reset Center"><Center kind="reset" /></Tool>
            <Tool name="Pick Center"><Center kind="pick" /></Tool>
            <Grip />
        </ToolBar>
    );
}

function FilterToolbar() {
    const gray = '#aeaba8';
    return (
        <ToolBar $short>
            <Grip $tight />
            <Tool name="Calculator" $w={39}><Calculator /></Tool>
            <Tool name="Contour" $w={39}><Contour /></Tool>
            <Tool name="Clip" $w={39}><WireCube kind="clip" fill={G} /></Tool>
            <Tool name="Slice" $w={39}><WireCube kind="slice" fill={G} /></Tool>
            <Tool name="Threshold" $w={39}><WireCube kind="thres" fill="#c5c2bf" stroke={gray} /></Tool>
            <Tool name="Extract Subset" $w={39}><WireCube kind="grid" fill="#bbb8b5" stroke={gray} /></Tool>
            <Tool name="Glyph" $w={39}><Glyph /></Tool>
            <Tool name="Stream Tracer" $w={39}><Stream /></Tool>
            <Tool name="Warp" $w={39}><Warp /></Tool>
            <Tool name="Group Datasets" $w={39}><GroupData /></Tool>
            <Tool name="Extract Level" $w={39}><GroupData gray /></Tool>
            <Grip $tight />
            <Tool name="Extract Selection" $w={39}><Extract /></Tool>
            <Tool name="Plot Selection" $w={39}>
                <Wave><path d="M15 1.500h11v11H15z" strokeDasharray="2 2" /><path d="M20.500 3l4 8h-8z" fill={G} stroke="none" /></Wave>
            </Tool>
            <Tool name="Plot Over Line" $w={39}><PlotLine /></Tool>
            <Tool name="Plot Global" $w={39}>
                <Wave><circle cx="20.500" cy="7" r="5.500" fill="#d89b2b" /><path d="M18 4h5v6h-5z" fill="#b98420" /></Wave>
            </Tool>
            <Tool name="Probe" $w={39}><Prism /></Tool>
            <Grip $tight />
            <Tool name="Ruler" $w={39}><Ruler /></Tool>
        </ToolBar>
    );
}

function PropertiesPanel() {
    return (
        <Panel>
            <Actions>
                <Push type="button" disabled><Icon s={18} v={28}><g opacity=".5"><Cube gray /></g></Icon>Apply</Push>
                <Push type="button" disabled>
                    <Icon s={18}><circle cx="9" cy="9" r="7" stroke="#999" strokeWidth="3" /><path d="M4 14L14 4" stroke="#999" strokeWidth="3" /></Icon>
                    Reset
                </Push>
                <Push type="button" $gap={4}>
                    <Icon s={14}><path d="M2 2l10 10M12 2L2 12" stroke="#e8202a" strokeWidth="4" /></Icon>
                    Delete
                </Push>
                <Push type="button" aria-label="Help">
                    <Icon s={18}>
                        <path d="M4.500 5.500c0-5 9-5 9 0 0 3-4.500 3-4.500 7M9 14.500v3" strokeWidth="3.500" />
                        <path d="M4.500 5.500c0-5 9-5 9 0 0 3-4.500 3-4.500 7M9 14.500v3" stroke={G} strokeWidth="2" />
                    </Icon>
                </Push>
            </Actions>
            <SearchRow>
                <Field type="text" aria-label="Search" placeholder="Search ... (use Esc to clear text)" />
                <Push type="button" $w={27} aria-label="Advanced"><Gear /></Push>
            </SearchRow>
            <ScrollArea>
                <ScrollContent>
                    <IconRow>
                        <Push type="button" $w={50} aria-label="Copy"><Copy /></Push>
                        <Push type="button" $w={50} aria-label="Paste" disabled><Paste /></Push>
                        <Push type="button" $w={50} aria-label="Restore"><Reload /></Push>
                        <Push type="button" $w={50} aria-label="Save"><Save /></Push>
                    </IconRow>
                    <Push type="button" $w={80} $h={24}>Refresh</Push>
                    <Checks>
                        <Check><Box type="checkbox" defaultChecked />Skip Zero Time</Check>
                    </Checks>
                    <PropertyList>
                        <PropertySelect id="case" label="Case Type" value="Reconstructed Case" />
                        <PropertySelect id="labelSize" label="Label Size" value="32-bit" />
                        <PropertySelect id="scalarSize" label="Scalar Size" value="64-bit (DP)" />
                    </PropertyList>
                    <Checks>
                        <Check><Box type="checkbox" defaultChecked />Create cell-to-point filtered data</Check>
                        <Check><Box type="checkbox" />Add dimensional units to array names</Check>
                    </Checks>
                    <RegionGroup
                        title="Mesh Regions"
                        mixed
                        h={125}
                        items={[{name: 'fixedWalls'}, {name: 'frontAndBack'}, {name: 'internalMesh', on: true}, {name: 'movingWall'}]}
                    />
                    <RegionGroup title="Cell Arrays" h={45} />
                    <RegionGroup title="Point Arrays" h={45} />
                </ScrollContent>
                <ScrollBar>
                    <button type="button" aria-label="Scroll up"><Icon s={8}><path d="M0 6h8L4 1z" fill="#444" stroke="none" /></Icon></button>
                    <Thumb />
                    <Groove />
                    <button type="button" aria-label="Scroll down"><Icon s={8}><path d="M0 2h8L4 7z" fill="#444" stroke="none" /></Icon></button>
                </ScrollBar>
            </ScrollArea>
        </Panel>
    );
}

function LeftDock() {
    return (
        <Dock>
            <DockHeader>Pipeline Browser</DockHeader>
            <Tree>
                <TreeRow>
                    <EyeSlot />
                    <TreeName>
                        <svg width="14" height="26" viewBox="0 0 14 26">
                            <path d="M8.500 0v5M8.500 21v5" stroke="#999" />
                            <path d="M5.500 5.500h6v13h-6z" fill="#999" stroke="#333" />
                            <path d="M7 8h3M7 10h3" stroke="#eee" />
                        </svg>
                        builtin:
                    </TreeName>
                </TreeRow>
                <TreeRow>
                    <EyeSlot>
                        <svg width="18" height="14" viewBox="0 0 18 14">
                            <path d="M1 7q8-11 16 0-8 10-16 0z" fill="#f3f3f3" stroke="#777" />
                            <circle cx="9" cy="6.500" r="4.500" fill="#2492d1" />
                            <circle cx="9" cy="6.500" r="2" fill="#012" />
                        </svg>
                    </EyeSlot>
                    <TreeName $selected>
                        <Icon s={14}>
                            <path d="M1 3l5 1v9l-5-3z" fill="#3c7f46" stroke="none" />
                            <path d="M1 3l7-2 6 1-8 2z" fill="#7fb86e" stroke="none" />
                            <path d="M6 4l9-2v10l-9 1.500z" fill="#55a05a" />
                        </Icon>
                        cavity.foam
                    </TreeName>
                </TreeRow>
            </Tree>
            <Splitter><span /></Splitter>
            <Tabs>
                <Tab type="button" $grow={110} $active>Properties</Tab>
                <Tab type="button" $grow={62}>View</Tab>
                <Tab type="button" $grow={86}>Display</Tab>
                <Tab type="button" $grow={117}>Information</Tab>
            </Tabs>
            <DockHeader>Properties</DockHeader>
            <PropertiesPanel />
        </Dock>
    );
}

function RenderArea() {
    return (
        <Main>
            <LayoutTabs>
                <LayoutTab>
                    <Icon s={9}><path d="M.5 1.500h8v7h-8z" stroke="#000" /><path d="M0 1h9" stroke="#000" strokeWidth="2" /></Icon>
                    Layout #1
                    <TinyButton type="button" aria-label="Close layout"><Float close /></TinyButton>
                </LayoutTab>
                <AddTab type="button">+</AddTab>
            </LayoutTabs>
            <ViewBar>
                <Tool name="Camera Undo" $w={26}>
                    <Camera s={20} extra={<path d="M5 15l1 11 10-2-3-3c2-4 6-2 5 5l5 1c2-10-8-14-13-8z" fill="#e01c24" stroke="none" />} />
                </Tool>
                <Tool name="Camera Redo" $w={26}>
                    <Camera s={20} gray extra={<path d="M24 15l-1 11-10-2 3-3c-2-4-6-2-5 5l-5 1c-2-10 8-14 13-8z" fill="#c5c2bf" stroke="#aaa" />} />
                </Tool>
                <Sep $small />
                <Tool name="Capture" $w={26}>
                    <Icon s={18}>
                        <path d="M1 5V1h4M13 1h4v4M17 13v4h-4M5 17H1v-4" stroke="#8b8b88" />
                        <path d="M3 6h3l1-2h4l1 2h3v9H3z" fill="#b9bcbd" stroke="#8b8e8f" />
                        <circle cx="9" cy="10" r="3" fill="#b4dcf5" stroke="#5b87a5" />
                    </Icon>
                </Tool>
                <Sep $small />
                <Tool name="Interaction Mode" $w={26}>
                    <Icon s={18}><text x="1" y="13" fill={O} stroke="none" fontFamily="Liberation Sans, sans-serif" fontWeight="700" fontSize="12">3D</text></Icon>
                </Tool>
                <Tool name="Adjust Camera View" $w={26}>
                    <Camera s={18} extra={<path d="M13 11l4-1 10 13-4 4L13 15z" fill="#c9a02c" stroke="#8a7340" />} />
                </Tool>
                <Sep $small />
                {['addSel', 'subSel', 'togSel'].map(n => <SmallTool key={n} name={n} />)}
                <Sep $small />
                {Object.keys(small).slice(3).map(n => <SmallTool key={n} name={n} />)}
                <ViewName href="#view">RenderView1</ViewName>
                <ViewButtons>
                    <Push type="button" $w={26} $h={25} aria-label="Split Horizontal">
                        <Icon s={14}><path d="M.5 .5h13v13H.5zM7 0v14" fill="#cdd5ee" stroke="#a3a9bd" /></Icon>
                    </Push>
                    <Push type="button" $w={26} $h={25} aria-label="Split Vertical">
                        <Icon s={14}><path d="M.5 .5h13v13H.5zM0 7h14" fill="#cdd5ee" stroke="#a3a9bd" /></Icon>
                    </Push>
                    <Push type="button" $w={26} $h={25} aria-label="Maximize">
                        <Icon s={9}><path d="M.5 1.500h8v7h-8z" stroke="#000" /><path d="M0 1h9" stroke="#000" strokeWidth="2" /></Icon>
                    </Push>
                    <Push type="button" $w={26} $h={25} aria-label="Close view"><Float close /></Push>
                </ViewButtons>
            </ViewBar>
            <Viewport><Scene /></Viewport>
        </Main>
    );
}

function App() {
    return (
        <Desktop>
            <GlobalStyle />
            <Behind>
                <svg width="4" height="1010" viewBox="0 0 4 1010">
                    <path d="M0 0h4v29H0z" fill="#f4f4f4" />
                    <path d="M0 9l3-1M0 13l3-1" stroke="#e08080" />
                    <path d="M0 17l3-1M0 21l3-1" stroke="#80c090" />
                    {specks.map(([y, c]) => <path key={y} d={`M0 ${y}q4-4 2 3t-2 4`} stroke={c} fill="none" />)}
                    <path d="M0 267h3" stroke="#ccc" strokeWidth="2" />
                </svg>
            </Behind>
            <Window>
                <TitleBar>
                    <svg width="20" height="14" viewBox="0 0 20 14">
                        <path d="M4 0h4.500l-4 14H0z" fill="#b5202c" />
                        <path d="M10 0h4.500l-4 14H6z" fill="#259147" />
                        <path d="M15.500 0H20l-4 14h-4.500z" fill="#1b559c" />
                    </svg>
                    <Title>ParaView 5.8.0</Title>
                    <WindowButton type="button" aria-label="Minimize"><Icon s={12}><path d="M0 5.500h12" stroke="#000" /></Icon></WindowButton>
                    <WindowButton type="button" aria-label="Restore"><Icon s={12}><path d="M.5.5h11v11H.5z" stroke="#000" /></Icon></WindowButton>
                    <WindowButton type="button" aria-label="Close"><Icon s={12}><path d="M0 0l12 12M12 0L0 12" stroke="#000" /></Icon></WindowButton>
                </TitleBar>
                <MenuBar>
                    {menus.map(m => {
                        const [text, at] = m.split(':');
                        const i = Number(at);
                        return <MenuItem key={text} type="button">{text.slice(0, i)}<u>{text[i]}</u>{text.slice(i + 1)}</MenuItem>;
                    })}
                </MenuBar>
                <MainToolbar />
                <ColorToolbar />
                <FilterToolbar />
                <Body>
                    <LeftDock />
                    <SideSplitter><span /></SideSplitter>
                    <RenderArea />
                </Body>
            </Window>
        </Desktop>
    );
}

export default App;
